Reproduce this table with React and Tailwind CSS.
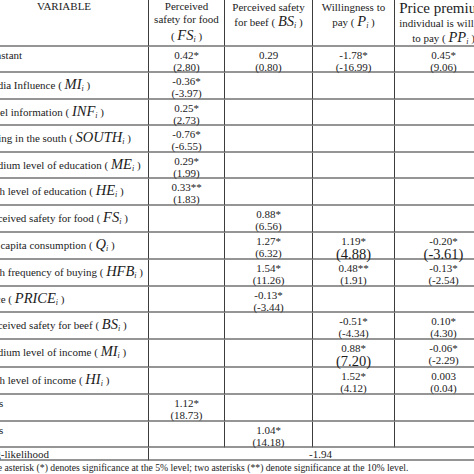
import React from "react";

const M = ({ v }) => (
  <span className="whitespace-nowrap">
    (&nbsp;<span className="italic text-[14.5px]">{v}</span>
    <sub className="italic text-[8px]">i</sub>&nbsp;)
  </span>
);

const rows = [
  { label: <>Constant</>, h: "h-[26px]", plain: true, c: [["0.42*", "(2.80)"], ["0.29", "(0.80)"], ["-1.78*", "(-16.99)"], ["0.45*", "(9.06)"]] },
  { label: <>Media Influence <M v="MI" /></>, h: "h-[27px]", c: [["-0.36*", "(-3.97)"], null, null, null] },
  { label: <>Label information <M v="INF" /></>, h: "h-[26px]", c: [["0.25*", "(2.73)"], null, null, null] },
  { label: <>Living in the south <M v="SOUTH" /></>, h: "h-[27px]", c: [["-0.76*", "(-6.55)"], null, null, null] },
  { label: <>Medium level of education <M v="ME" /></>, h: "h-[26px]", c: [["0.29*", "(1.99)"], null, null, null] },
  { label: <>High level of education <M v="HE" /></>, h: "h-[27px]", c: [["0.33**", "(1.83)"], null, null, null] },
  { label: <>Perceived safety for food <M v="FS" /></>, h: "h-[27px]", c: [null, ["0.88*", "(6.56)"], null, null] },
  { label: <>Per capita consumption <M v="Q" /></>, h: "h-[27px]", c: [null, ["1.27*", "(6.32)"], ["1.19*", "(4.88)", true], ["-0.20*", "(-3.61)", true]] },
  { label: <>High frequency of buying <M v="HFB" /></>, h: "h-[27px]", c: [null, ["1.54*", "(11.26)"], ["0.48**", "(1.91)"], ["-0.13*", "(-2.54)"]] },
  { label: <>Price <M v="PRICE" /></>, h: "h-[26px]", c: [null, ["-0.13*", "(-3.44)"], null, null] },
  { label: <>Perceived safety for beef <M v="BS" /></>, h: "h-[27px]", c: [null, null, ["-0.51*", "(-4.34)"], ["0.10*", "(4.30)"]] },
  { label: <>Medium level of income <M v="MI" /></>, h: "h-[28px]", c: [null, null, ["0.88*", "(7.20)", true], ["-0.06*", "(-2.29)"]] },
  { label: <>High level of income <M v="HI" /></>, h: "h-[27px]", c: [null, null, ["1.52*", "(4.12)"], ["0.003", "(0.04)"]] },
  { label: <>Cuts</>, h: "h-[27px]", plain: true, c: [["1.12*", "(18.73)"], null, null, null] },
  { label: <>Cuts</>, h: "h-[26px]", plain: true, c: [null, ["1.04*", "(14.18)"], null, null] },
];

const line = "border-b-2 border-b-[#959595] border-r border-r-[#3c3c3c]";

function Val({ v }) {
  if (!v) return null;
  return (
    <div className="flex flex-col items-center pt-[2px] leading-[12px]">
      <span>{v[0]}</span>
      <span className={v[2] ? "text-[14.5px] leading-[14px]" : ""}>{v[1]}</span>
    </div>
  );
}

export default function App() {
  return (
    <div
      className="w-[474px] h-[474px] overflow-hidden bg-white text-[#1c1c1c] text-[11px]"
      style={{ fontFamily: '"Liberation Serif", "Times New Roman", serif' }}
    >
      <div className="ml-[-20px] w-[513px]">
        <div className="grid grid-cols-[169px_76px_88px_82px_98px]">
          <div className={`${line} h-[47px] text-center leading-[12px]`}>VARIABLE</div>
          <div className={`${line} h-[47px] text-center leading-[13px] whitespace-nowrap`}>
            Perceived
            <br />
            safety for food
            <div className="leading-[17px] mt-[1px]">
              <M v="FS" />
            </div>
          </div>
          <div className={`${line} h-[47px] text-center leading-[14px] whitespace-nowrap`}>
            Perceived safety
            <br />
            for beef <M v="BS" />
          </div>
          <div className={`${line} h-[47px] text-center leading-[14px] whitespace-nowrap`}>
            Willingness to
            <br />
            pay <M v="P" />
          </div>
          <div className={`${line} h-[47px] text-center leading-[14px] whitespace-nowrap`}>
            <div className="text-[15px] leading-[16px]">Price premium</div>
            <div>individual is willing</div>
            <div>
              to pay <M v="PP" />
            </div>
          </div>

          {rows.map((r, i) => (
            <React.Fragment key={i}>
              <div
                className={`${line} ${r.h} pl-[3px] whitespace-nowrap ${
                  r.plain ? "pt-[2px] leading-[12px]" : "pt-[3px] leading-[16px]"
                }`}
              >
                {r.label}
              </div>
              {r.c.map((v, j) => (
                <div key={j} className={`${line} ${r.h}`}>
                  <Val v={v} />
                </div>
              ))}
            </React.Fragment>
          ))}

          <div className={`${line} h-[13px] pl-[3px] leading-[12px]`}>Log-likelihood</div>
          <div className={`${line} h-[13px] col-span-4 text-center leading-[12px]`}>-1.94</div>
        </div>
        <div className="pl-[6px] pt-[1px] text-[9.7px] leading-[12px] whitespace-nowrap">
          One asterisk (*) denotes significance at the 5% level; two asterisks (**) denote significance at the 10% level.
        </div>
      </div>
    </div>
  );
}
